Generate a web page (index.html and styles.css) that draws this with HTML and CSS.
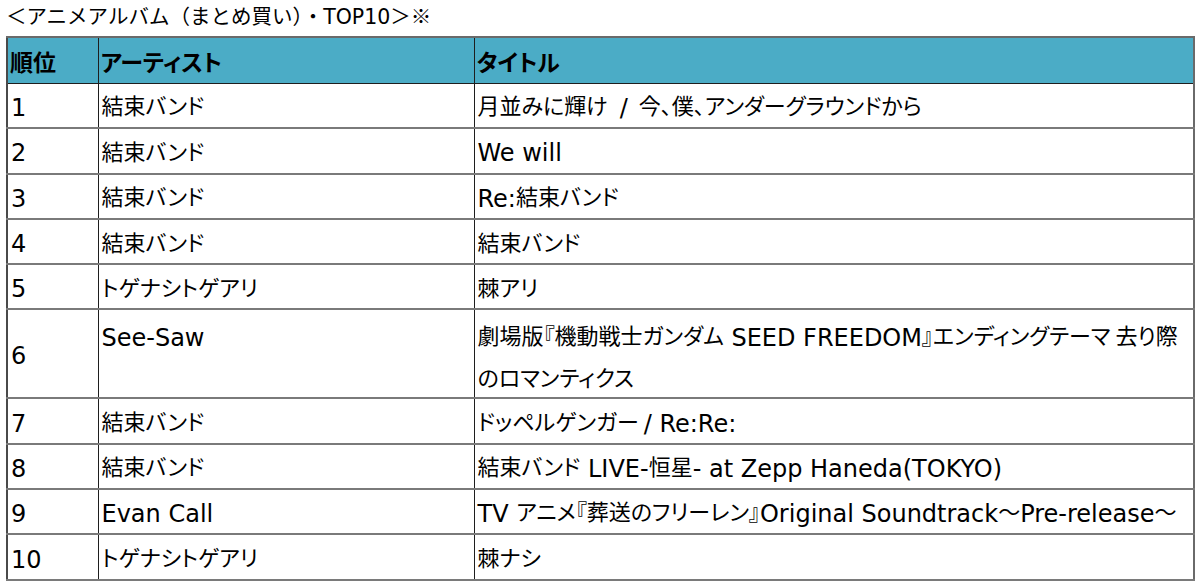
FILE: index.html
```html
<!DOCTYPE html>
<html lang="ja">
<head>
<meta charset="utf-8">
<title>アニメアルバム TOP10</title>
<link rel="stylesheet" href="styles.css">
</head>
<body>
<div class="page">
  <p class="caption">＜アニメアルバム（まとめ買い）・<span class="en-s">TOP10</span>＞※</p>
  <table class="rank-table">
    <colgroup>
      <col class="c-rank">
      <col class="c-artist">
      <col class="c-title">
    </colgroup>
    <thead>
      <tr>
        <th>順位</th>
        <th>アーティスト</th>
        <th>タイトル</th>
      </tr>
    </thead>
    <tbody>
      <tr>
        <td class="rank">1</td>
        <td>結束バンド</td>
        <td>月並みに輝け<span class="en sep">/</span>今、僕、アンダーグラウンドから</td>
      </tr>
      <tr>
        <td class="rank">2</td>
        <td>結束バンド</td>
        <td><span class="en">We will</span></td>
      </tr>
      <tr>
        <td class="rank">3</td>
        <td>結束バンド</td>
        <td><span class="en">Re:</span>結束バンド</td>
      </tr>
      <tr>
        <td class="rank">4</td>
        <td>結束バンド</td>
        <td>結束バンド</td>
      </tr>
      <tr>
        <td class="rank">5</td>
        <td>トゲナシトゲアリ</td>
        <td>棘アリ</td>
      </tr>
      <tr class="tall">
        <td class="rank">6</td>
        <td class="top"><span class="en">See-Saw</span></td>
        <td class="top">劇場版『機動戦士ガンダム<span class="en"> SEED FREEDOM</span>』エンディングテーマ 去り際<br>のロマンティクス</td>
      </tr>
      <tr>
        <td class="rank">7</td>
        <td>結束バンド</td>
        <td>ドッペルゲンガー <span class="en">/ Re:Re:</span></td>
      </tr>
      <tr>
        <td class="rank">8</td>
        <td>結束バンド</td>
        <td>結束バンド<span class="en"> LIVE-</span>恒星<span class="en">- at Zepp Haneda(TOKYO)</span></td>
      </tr>
      <tr>
        <td class="rank">9</td>
        <td><span class="en">Evan Call</span></td>
        <td><span class="en">TV </span>アニメ『葬送のフリーレン』<span class="en">Original Soundtrack</span>～<span class="en">Pre-release</span>～</td>
      </tr>
      <tr>
        <td class="rank">10</td>
        <td>トゲナシトゲアリ</td>
        <td>棘ナシ</td>
      </tr>
    </tbody>
  </table>
</div>
</body>
</html>
```

FILE: styles.css
```css
html, body {
  margin: 0;
  padding: 0;
  background: #ffffff;
}

body {
  font-family: "Noto Sans CJK JP", "DejaVu Sans", sans-serif;
  color: #000000;
  font-feature-settings: "palt";
}

.page {
  padding: 1px 7px 0 6px;
}

.caption {
  margin: 0 0 7px 0;
  font-size: 20.5px;
  line-height: 28px;
  height: 28px;
  font-feature-settings: normal;
  white-space: nowrap;
}

.en, .en-s, .rank {
  font-family: "DejaVu Sans", "Noto Sans CJK JP", sans-serif;
}

.en-s {
  font-size: 20.5px;
}

.en {
  font-size: 24px;
  line-height: 1;
  vertical-align: -2px;
}

.sep {
  margin: 0 11px 0 12px;
}

.rank-table {
  width: 1187px;
  border-collapse: collapse;
  table-layout: fixed;
  border-top: 2px solid #6a6a6a;
  border-left: 2px solid #4a4a4a;
  border-right: 2px solid #6a6a6a;
  border-bottom: 2px solid #7a7a7a;
}

.c-rank { width: 91px; }
.c-artist { width: 376px; }
.c-title { width: 720px; }

.rank-table th {
  box-sizing: border-box;
  background: #4bacc6;
  font-size: 23px;
  font-weight: 700;
  text-align: left;
  height: 46px;
  padding: 2px 2px 0 2px;
  line-height: 30px;
  border-right: 1px solid #1e1e1e;
  border-bottom: 1px solid #1e1e1e;
  vertical-align: middle;
}

.rank-table td {
  box-sizing: border-box;
  font-size: 22px;
  height: 45.3px;
  padding: 0 3px 2px 3px;
  line-height: 30px;
  white-space: nowrap;
  vertical-align: middle;
  border-right: 1px solid #1e1e1e;
  border-bottom: 2px solid #7a7a7a;
}

.rank-table td.rank {
  font-size: 24px;
  padding: 5px 3px 0 3px;
}

.rank-table tr.tall td {
  height: 88px;
}

.rank-table td.top {
  vertical-align: top;
  line-height: 42px;
  padding-top: 3px;
  padding-bottom: 0;
}
```
